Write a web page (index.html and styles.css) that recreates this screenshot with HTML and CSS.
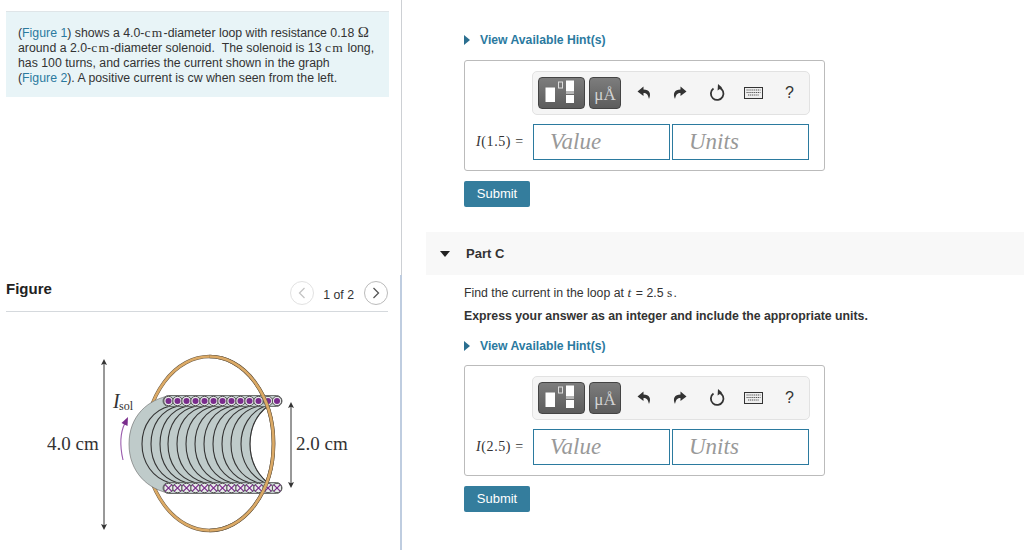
FILE: index.html
```html
<!DOCTYPE html>
<html lang="en">
<head>
    <meta charset="UTF-8">
    <meta name="viewport" content="width=device-width, initial-scale=1.0">
    <title>Loop around a solenoid</title>
    <link rel="stylesheet" href="styles.css">
</head>
<body>
<div class="page">
    <div class="leftPane">
        <div class="intro">
            <p>(<a href="#">Figure 1</a>) shows a 4.0-<span class="math">cm</span>-diameter loop with resistance 0.18 <span class="math ohm">&#937;</span><br>
            around a 2.0-<span class="math">cm</span>-diameter solenoid. &nbsp;The solenoid is 13 <span class="math">cm</span> long,<br>
            has 100 turns, and carries the current shown in the graph<br>
            (<a href="#">Figure 2</a>). A positive current is cw when seen from the left.</p>
        </div>

        <div class="figureHead">
            <h2>Figure</h2>
            <div class="pager">
                <span class="pageBtn off"><svg width="8" height="12" viewBox="0 0 8 12"><path d="M6.5 1 L1.5 6 L6.5 11" fill="none" stroke="#c4c4c4" stroke-width="1.3"/></svg></span>
                <span class="pageText">1 of 2</span>
                <span class="pageBtn"><svg width="8" height="12" viewBox="0 0 8 12"><path d="M1.5 1 L6.5 6 L1.5 11" fill="none" stroke="#555" stroke-width="1.3"/></svg></span>
            </div>
        </div>

        <!-- viewBox uses the coordinates of the page -->
        <svg class="figure" width="382" height="220" viewBox="6 330 382 220">
            <defs>
                <marker id="tip" markerWidth="6" markerHeight="6" refX="3" refY="3" orient="auto-start-reverse" markerUnits="userSpaceOnUse">
                    <path d="M0 0 L6 3 L0 6 L1.2 3 Z" fill="#333"/>
                </marker>
                <g id="dotTurn">
                    <circle r="4.7" fill="#e8ebea" stroke="#444" stroke-width="0.9"/>
                    <circle r="3" fill="#7a2c8c"/>
                </g>
                <g id="crossTurn">
                    <circle r="4.7" fill="#e8ebea" stroke="#444" stroke-width="0.9"/>
                    <path d="M-3.4 -3.4 L3.4 3.4 M-3.4 3.4 L3.4 -3.4" stroke="#7a2c8c" stroke-width="1.2"/>
                </g>
            </defs>

            <ellipse cx="209.5" cy="442.5" rx="64" ry="87" fill="none" stroke="#6a5a44" stroke-width="3.6"/>
            <ellipse cx="209.5" cy="442.5" rx="64" ry="87" fill="none" stroke="#dcaa66" stroke-width="2.6"/>

            <path d="M171 394.5 C148 398 129 415 129 443 C129 471 148 489 171 492.5 L268 482 C256 472 250 458 250 443 C250 428 256 414 268 405 Z" fill="#bfcbca" stroke="#666" stroke-width="0.6"/>
            <g fill="none" stroke="#333" stroke-width="1.1">
                <path d="M170 405 C153 409 142 424 142 443 C142 462 153 477 170 482"/>
                <path d="M178 405 C161 409 151 424 151 443 C151 462 161 477 178 482"/>
                <path d="M187 405 C170 409 160 424 160 443 C160 462 170 477 187 482"/>
                <path d="M196 405 C178 409 168 424 168 443 C168 462 178 477 196 482"/>
                <path d="M205 405 C187 409 177 424 177 443 C177 462 187 477 205 482"/>
                <path d="M214 405 C196 409 186 424 186 443 C186 462 196 477 214 482"/>
                <path d="M223 405 C205 409 195 424 195 443 C195 462 205 477 223 482"/>
                <path d="M232 405 C214 409 204 424 204 443 C204 462 214 477 232 482"/>
                <path d="M241 405 C223 409 213 424 213 443 C213 462 223 477 241 482"/>
                <path d="M250 405 C232 409 222 424 222 443 C222 462 232 477 250 482"/>
                <path d="M259 405 C241 409 231 424 231 443 C231 462 241 477 259 482"/>
                <path d="M265 405 C250 411 241 426 241 443 C241 460 250 475 265 482"/>
                <path d="M268 405 C256 414 250 428 250 443 C250 458 256 472 268 482"/>
            </g>

            <rect x="163" y="394.5" width="119" height="11" rx="5.5" fill="#bfcbca" stroke="#555" stroke-width="0.8"/>
            <rect x="163" y="481.5" width="119" height="11" rx="5.5" fill="#bfcbca" stroke="#555" stroke-width="0.8"/>

            <use href="#dotTurn" x="168.5" y="400"/><use href="#dotTurn" x="177.5" y="400"/><use href="#dotTurn" x="186.5" y="400"/>
            <use href="#dotTurn" x="195.5" y="400"/><use href="#dotTurn" x="204.5" y="400"/><use href="#dotTurn" x="213.5" y="400"/>
            <use href="#dotTurn" x="222.5" y="400"/><use href="#dotTurn" x="231.5" y="400"/><use href="#dotTurn" x="240.5" y="400"/>
            <use href="#dotTurn" x="249.5" y="400"/><use href="#dotTurn" x="258.5" y="400"/><use href="#dotTurn" x="268" y="400"/><use href="#dotTurn" x="277" y="400"/>

            <use href="#crossTurn" x="168.5" y="487"/><use href="#crossTurn" x="177.5" y="487"/><use href="#crossTurn" x="186.5" y="487"/>
            <use href="#crossTurn" x="195.5" y="487"/><use href="#crossTurn" x="204.5" y="487"/><use href="#crossTurn" x="213.5" y="487"/>
            <use href="#crossTurn" x="222.5" y="487"/><use href="#crossTurn" x="231.5" y="487"/><use href="#crossTurn" x="240.5" y="487"/>
            <use href="#crossTurn" x="249.5" y="487"/><use href="#crossTurn" x="258.5" y="487"/><use href="#crossTurn" x="268" y="487"/><use href="#crossTurn" x="277" y="487"/>

            <!-- right half of the loop passes in front of the coil -->
            <path d="M209.5 355.5 A64 87 0 0 1 209.5 529.5" fill="none" stroke="#6a5a44" stroke-width="3.6"/>
            <path d="M209.5 355.5 A64 87 0 0 1 209.5 529.5" fill="none" stroke="#dcaa66" stroke-width="2.6"/>

            <line x1="104" y1="361" x2="104" y2="526" stroke="#333" stroke-width="1" marker-start="url(#tip)" marker-end="url(#tip)"/>
            <line x1="291" y1="404" x2="291" y2="484" stroke="#333" stroke-width="1" marker-start="url(#tip)" marker-end="url(#tip)"/>

            <path d="M123 459 C120 446 120 432 125 422" fill="none" stroke="#9a5aac" stroke-width="1.1"/>
            <path d="M128 416 L121.5 422 L127.5 425 Z" fill="#7a2c8c"/>

            <text class="figLabel" x="47" y="449">4.0 cm</text>
            <text class="figLabel" x="296" y="449">2.0 cm</text>
            <text class="figLetter" x="113" y="407">I</text>
            <text class="figSub" x="119" y="409">sol</text>
        </svg>
    </div>

    <div class="rightPane">
        <a class="hint firstHint" href="#"><span class="hintArrow"></span>View Available Hint(s)</a>

        <div class="answerBox">
            <div class="toolbar">
                <span class="toolBtn wide"><svg width="47" height="32" viewBox="0 0 47 32"><rect x="7.5" y="10.5" width="9.5" height="14.5" fill="#fff"/><rect x="20.5" y="5" width="4" height="6" fill="none" stroke="#ddd" stroke-width="1"/><rect x="28" y="3.5" width="8" height="11" fill="#fff"/><rect x="28" y="15.5" width="8" height="1" fill="#fff"/><rect x="28" y="18" width="8" height="8" fill="#fff"/></svg></span>
                <span class="toolBtn unit">&#956;&#197;</span>
                <svg class="toolIcon first" width="16" height="16" viewBox="0 0 16 16"><path d="M7.5 1.5 L1.5 6.5 L7.5 11 L7.5 8 C10.5 8 12 9.5 13 14 C15.5 8.5 13.5 4.5 7.5 4.5 Z" fill="#333"/></svg>
                <svg class="toolIcon" width="16" height="16" viewBox="0 0 16 16"><path d="M8.5 1.5 L14.5 6.5 L8.5 11 L8.5 8 C5.5 8 4 9.5 3 14 C0.5 8.5 2.5 4.5 8.5 4.5 Z" fill="#333"/></svg>
                <svg class="toolIcon" width="18" height="18" viewBox="0 0 18 18"><path d="M5.5 4.5 A6.3 6.3 0 1 0 11 3.6" fill="none" stroke="#333" stroke-width="1.8"/><path d="M10 0 L14 3.6 L9.6 6.5 Z" fill="#333"/></svg>
                <svg class="toolIcon keys" width="19" height="12" viewBox="0 0 19 12"><rect x="0.5" y="0.5" width="18" height="11" fill="#eee" stroke="#333"/><path d="M2.5 3 H16.5 M2.5 5.5 H16.5 M4 8 H15" stroke="#555" stroke-dasharray="1.2 0.7"/></svg>
                <span class="toolHelp">?</span>
            </div>
            <div class="answerRow">
                <span class="answerLabel"><i>I</i>(1.5) =</span>
                <span class="field">Value</span>
                <span class="field units">Units</span>
            </div>
        </div>
        <a class="submit" href="#">Submit</a>

        <div class="partBar"><span class="partArrow"></span>Part C</div>

        <div class="partBody">
            <p class="question">Find the current in the loop at <span class="math"><i>t</i></span> = 2.5 <span class="math">s</span>.</p>
            <p class="express">Express your answer as an integer and include the appropriate units.</p>
            <a class="hint" href="#"><span class="hintArrow"></span>View Available Hint(s)</a>

            <div class="answerBox second">
                <div class="toolbar">
                    <span class="toolBtn wide"><svg width="47" height="32" viewBox="0 0 47 32"><rect x="7.5" y="10.5" width="9.5" height="14.5" fill="#fff"/><rect x="20.5" y="5" width="4" height="6" fill="none" stroke="#ddd" stroke-width="1"/><rect x="28" y="3.5" width="8" height="11" fill="#fff"/><rect x="28" y="15.5" width="8" height="1" fill="#fff"/><rect x="28" y="18" width="8" height="8" fill="#fff"/></svg></span>
                    <span class="toolBtn unit">&#956;&#197;</span>
                    <svg class="toolIcon first" width="16" height="16" viewBox="0 0 16 16"><path d="M7.5 1.5 L1.5 6.5 L7.5 11 L7.5 8 C10.5 8 12 9.5 13 14 C15.5 8.5 13.5 4.5 7.5 4.5 Z" fill="#333"/></svg>
                    <svg class="toolIcon" width="16" height="16" viewBox="0 0 16 16"><path d="M8.5 1.5 L14.5 6.5 L8.5 11 L8.5 8 C5.5 8 4 9.5 3 14 C0.5 8.5 2.5 4.5 8.5 4.5 Z" fill="#333"/></svg>
                    <svg class="toolIcon" width="18" height="18" viewBox="0 0 18 18"><path d="M5.5 4.5 A6.3 6.3 0 1 0 11 3.6" fill="none" stroke="#333" stroke-width="1.8"/><path d="M10 0 L14 3.6 L9.6 6.5 Z" fill="#333"/></svg>
                    <svg class="toolIcon keys" width="19" height="12" viewBox="0 0 19 12"><rect x="0.5" y="0.5" width="18" height="11" fill="#eee" stroke="#333"/><path d="M2.5 3 H16.5 M2.5 5.5 H16.5 M4 8 H15" stroke="#555" stroke-dasharray="1.2 0.7"/></svg>
                    <span class="toolHelp">?</span>
                </div>
                <div class="answerRow">
                    <span class="answerLabel"><i>I</i>(2.5) =</span>
                    <span class="field">Value</span>
                    <span class="field units">Units</span>
                </div>
            </div>
            <a class="submit" href="#">Submit</a>
        </div>
    </div>
</div>
</body>
</html>
```
FILE: styles.css
```css
body {
    margin: 0;
    font-family: "Liberation Sans", Arial, sans-serif;
    font-size: 12.3px;
    color: #333;
    background-color: white;
}

a {
    color: #2b7a9f;
    text-decoration: none;
}

p {
    margin: 0;
}

.page {
    display: flex;
    height: 550px;
    overflow: hidden;
}

.math {
    font-family: "Liberation Serif", serif;
    font-size: 13.5px;
    line-height: 1;
    letter-spacing: 1.3px;
}

.math.ohm {
    font-size: 15px;
}

/* left column */
.leftPane {
    width: 402px;
    flex-shrink: 0;
    padding-left: 6px;
    box-sizing: border-box;
    border-right: 1px solid #cdd0d4;
    position: relative;
}

.leftPane::after {
    content: "";
    position: absolute;
    top: 275px;
    bottom: 0;
    right: -1px;
    width: 2px;
    background-color: #bfcde0;
}

.intro {
    width: 383px;
    height: 86px;
    box-sizing: border-box;
    margin-top: 11px;
    padding: 13px 12px 0;
    background-color: #e8f4f7;
    border-top: 1px solid #dfe5e8;
    line-height: 15px;
}

.figureHead {
    width: 382px;
    height: 37px;
    margin-top: 178px;
    display: flex;
    justify-content: space-between;
    align-items: center;
    border-bottom: 1px solid #d5d9dd;
    box-sizing: border-box;
    padding-bottom: 9px;
}

.figureHead h2 {
    margin: 0;
    font-size: 15px;
    font-weight: bold;
    color: #222;
}

.pager {
    display: flex;
    align-items: center;
    margin-top: 8px;
}

.pageBtn {
    width: 24px;
    height: 24px;
    box-sizing: border-box;
    border: 1px solid #bbb;
    border-radius: 50%;
    display: flex;
    align-items: center;
    justify-content: center;
}

.pageBtn.off {
    border-color: #e2e2e2;
}

.pageText {
    margin: 4px 10px 0 9px;
    font-size: 12.3px;
}

.figure {
    display: block;
    margin-top: 19px;
}

.figLabel {
    font-family: "Liberation Serif", serif;
    font-size: 19px;
    fill: #333;
}

.figLetter {
    font-family: "Liberation Serif", serif;
    font-size: 20px;
    font-style: italic;
    fill: #333;
}

.figSub {
    font-family: "Liberation Serif", serif;
    font-size: 12px;
    fill: #333;
}

/* right column */
.rightPane {
    flex: 1;
    padding-left: 62px;
}

.hint {
    display: flex;
    align-items: center;
    font-weight: bold;
    font-size: 12.2px;
    height: 14px;
}

.firstHint {
    margin-top: 33px;
}

.hintArrow {
    width: 0;
    height: 0;
    margin-right: 10px;
    border-left: 6px solid #2b6f90;
    border-top: 5px solid transparent;
    border-bottom: 5px solid transparent;
}

.answerBox {
    width: 361px;
    height: 111px;
    box-sizing: border-box;
    margin-top: 13px;
    border: 1px solid #bbb;
    border-radius: 3px;
    padding: 10px 15px 0 67px;
}

.toolbar {
    width: 278px;
    height: 44px;
    box-sizing: border-box;
    background-color: #f5f5f5;
    border: 1px solid #e2e2e2;
    border-radius: 5px;
    padding-left: 5px;
    display: flex;
    align-items: center;
}

.toolBtn {
    height: 32px;
    box-sizing: border-box;
    border: 1px solid #444;
    border-radius: 4px;
    background: linear-gradient(#7d7d7d, #5c5c5c);
    display: flex;
    align-items: center;
    justify-content: center;
    color: #d4d4d4;
    flex-shrink: 0;
}

.toolBtn.wide {
    width: 47px;
    margin-right: 4px;
}

.toolBtn.wide svg {
    margin: -1px;
}

.toolBtn.unit {
    width: 32px;
    font-family: "Liberation Serif", serif;
    font-size: 17px;
    padding-top: 3px;
}

.toolIcon {
    margin-left: 20px;
    flex-shrink: 0;
}

.toolIcon.first {
    margin-left: 15px;
}

.toolIcon.keys {
    margin-left: 18px;
}

.toolHelp {
    margin-left: 22px;
    font-size: 16px;
}

.answerRow {
    display: flex;
    align-items: center;
    margin-top: 9px;
    margin-left: -56px;
}

.answerLabel {
    width: 57px;
    font-family: "Liberation Serif", serif;
    font-size: 14px;
    letter-spacing: 0.6px;
    white-space: nowrap;
}

.field {
    width: 137px;
    height: 36px;
    box-sizing: border-box;
    border: 1px solid #2b7a9f;
    padding-left: 16px;
    font-family: "Liberation Serif", serif;
    font-style: italic;
    font-size: 23px;
    line-height: 33px;
    color: #999;
}

.field.units {
    margin-left: 2px;
}

.submit {
    display: block;
    width: 66px;
    height: 26px;
    margin-top: 10px;
    background-color: #347d9d;
    color: white;
    border-radius: 2px;
    text-align: center;
    line-height: 26px;
    font-size: 13px;
}

.partBar {
    height: 43px;
    margin: 25px 0 0 -38px;
    background-color: #f8f8f8;
    display: flex;
    align-items: center;
    font-weight: bold;
    font-size: 13px;
}

.partArrow {
    width: 0;
    height: 0;
    margin: 0 16px 0 14px;
    border-top: 6px solid #222;
    border-left: 5px solid transparent;
    border-right: 5px solid transparent;
}

.partBody {
    padding-top: 11px;
}

.question {
    line-height: 14px;
}

.express {
    margin-top: 9px;
    font-weight: bold;
    line-height: 14px;
}

.partBody .hint {
    margin-top: 16px;
}

.partBody .answerBox {
    margin-top: 12px;
}
```
